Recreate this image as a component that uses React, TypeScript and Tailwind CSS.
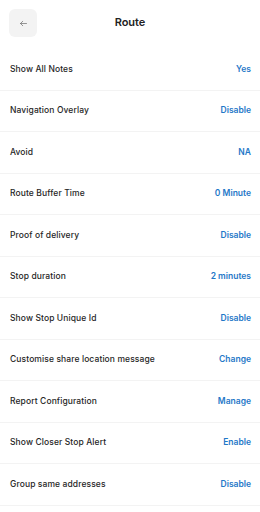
import React from 'react';

const rows: { label: string; value: string }[] = [
    { label: 'Show All Notes', value: 'Yes' },
    { label: 'Navigation Overlay', value: 'Disable' },
    { label: 'Avoid', value: 'NA' },
    { label: 'Route Buffer Time', value: '0 Minute' },
    { label: 'Proof of delivery', value: 'Disable' },
    { label: 'Stop duration', value: '2 minutes' },
    { label: 'Show Stop Unique Id', value: 'Disable' },
    { label: 'Customise share location message', value: 'Change' },
    { label: 'Report Configuration', value: 'Manage' },
    { label: 'Show Closer Stop Alert', value: 'Enable' },
    { label: 'Group same addresses', value: 'Disable' },
];

const BackArrow = () => (
    <svg width="9" height="9" viewBox="0 0 24 24" fill="none" stroke="#666" strokeWidth="1.8" strokeLinecap="round" strokeLinejoin="round">
        <path d="M20 12H4" />
        <path d="M10 6l-6 6 6 6" />
    </svg>
);

export default function App() {
    return (
        <div className="w-[260px] h-[512px] bg-white overflow-hidden" style={{ fontFamily: 'Inter, "Noto Sans", sans-serif' }}>
            <div className="relative h-[49px] flex items-center justify-center">
                <button className="absolute left-[9px] top-[9px] w-[28px] h-[28px] rounded-[6px] bg-[#f3f3f3] flex items-center justify-center">
                    <BackArrow />
                </button>
                <span className="text-[11px] font-semibold text-[#222] -mt-[4px]">Route</span>
            </div>
            <div className="flex flex-col">
                {rows.map((row) => (
                    <div key={row.label} className="h-[41.5px] flex items-center justify-between pl-[10px] pr-[9px] border-b border-[#f3f3f3]">
                        <span className="text-[8.5px] font-medium text-[#262626] tracking-[0.1px]">{row.label}</span>
                        <span className="text-[8.5px] font-semibold text-[#1f78c8]">{row.value}</span>
                    </div>
                ))}
            </div>
        </div>
    );
}
